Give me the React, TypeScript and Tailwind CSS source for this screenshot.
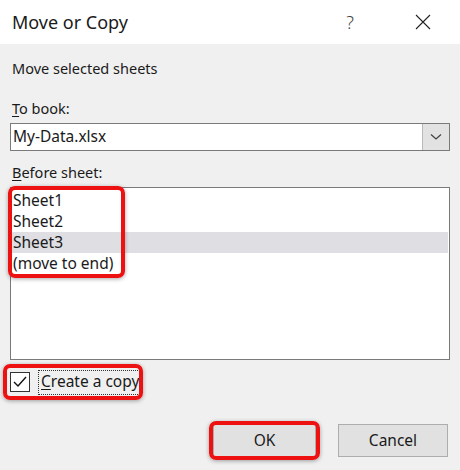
import React from "react";

const sheets = ["Sheet1", "Sheet2", "Sheet3", "(move to end)"];

function CloseIcon() {
  return (
    <svg width="16" height="16" viewBox="0 0 16 16" className="text-[#222]">
      <path d="M1 1 L15 15 M15 1 L1 15" stroke="currentColor" strokeWidth="1.1" fill="none" />
    </svg>
  );
}

function Chevron() {
  return (
    <svg width="12" height="8" viewBox="0 0 12 8">
      <path d="M1 1.5 L6 6 L11 1.5" stroke="#444" strokeWidth="1.3" fill="none" />
    </svg>
  );
}

export default function App() {
  return (
    <div
      className="w-[460px] h-[470px] overflow-hidden bg-[#f0f0f0] text-[#1a1a1a]"
      style={{ fontFamily: '"Noto Sans", "Open Sans", sans-serif' }}
    >
      {/* Title bar */}
      <div className="h-[44px] bg-white flex items-center pl-[12px]">
        <span className="text-[18px] leading-none">Move or Copy</span>
        <div className="ml-auto flex items-center">
          <span className="text-[18px] leading-none text-[#444] font-light w-[20px] text-center mr-[55px]">?</span>
          <div className="mr-[29px]">
            <CloseIcon />
          </div>
        </div>
      </div>

      {/* Body */}
      <div className="px-[10px] text-[14.5px]">
        <div className="mt-[14px] h-[20px] leading-[20px] pl-[2px]">Move selected sheets</div>

        <div className="mt-[20px] h-[20px] leading-[20px] pl-[2px]">
          <span className="underline underline-offset-2">T</span>o book:
        </div>

        {/* Combo box */}
        <div className="mt-[5px] h-[28px] flex bg-white border border-[#7a7a7a]">
          <div className="flex-1 flex items-center pl-[2px] text-[15.5px]">My-Data.xlsx</div>
          <div className="w-[27px] bg-[#e2e2e2] border-l border-[#b9b9b9] flex items-center justify-center">
            <Chevron />
          </div>
        </div>

        <div className="mt-[11px] h-[20px] leading-[20px] pl-[2px]">
          <span className="underline underline-offset-2">B</span>efore sheet:
        </div>

        {/* List box */}
        <div className="relative mt-[5px] h-[173px] bg-white border border-[#7a7a7a] pt-[2px] pr-[1px]">
          {sheets.map((s, i) => (
            <div
              key={s}
              className={`h-[21px] leading-[21px] pl-[2px] text-[15.5px] ${i === 2 ? "bg-[#dedee3]" : ""}`}
            >
              {s}
            </div>
          ))}
          <div className="absolute left-[-3px] top-[-2px] w-[117px] h-[92px] border-[4px] border-[#ee1111] rounded-[7px] shadow-[0_1px_4px_rgba(0,0,0,0.35)]" />
        </div>

        {/* Create a copy */}
        <div className="relative mt-[4px] h-[36px] flex items-center text-[15.5px]">
          <div className="w-[20px] h-[20px] bg-white border border-[#333] flex items-center justify-center">
            <svg width="16" height="14" viewBox="0 0 16 14">
              <path d="M2 7 L6 11 L14 2" stroke="#111" strokeWidth="1.4" fill="none" />
            </svg>
          </div>
          <div className="ml-[8px] h-[25px] px-[2px] flex items-center border border-dotted border-[#333]">
            <span>
              <span className="underline underline-offset-2">C</span>reate a copy
            </span>
          </div>
          <div className="absolute left-[-7px] top-0 w-[140px] h-[36px] border-[4px] border-[#ee1111] rounded-[7px] shadow-[0_1px_4px_rgba(0,0,0,0.35)]" />
        </div>

        {/* Buttons */}
        <div className="mt-[24px] flex justify-end gap-[22px] pr-[2px]">
          <div className="relative">
            <button className="w-[103px] h-[33px] bg-[#e1e1e1] border border-[#adadad] text-[15.5px]">OK</button>
            <div className="absolute left-[-4px] top-[-3px] w-[111px] h-[39px] border-[4px] border-[#ee1111] rounded-[7px] shadow-[0_1px_4px_rgba(0,0,0,0.35)]" />
          </div>
          <button className="w-[110px] h-[33px] bg-[#e1e1e1] border border-[#adadad] text-[15.5px]">Cancel</button>
        </div>
      </div>
    </div>
  );
}
